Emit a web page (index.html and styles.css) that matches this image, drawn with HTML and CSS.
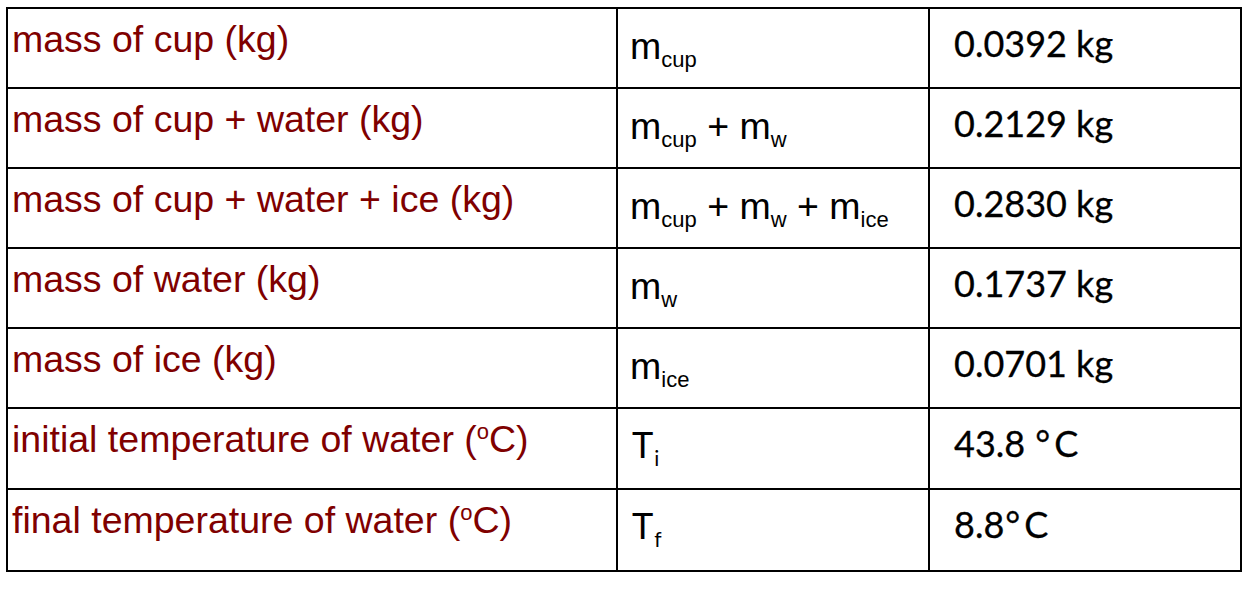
FILE: index.html
```html
<!DOCTYPE html>
<html>
<head>
<meta charset="utf-8">
<link rel="stylesheet" href="styles.css">
</head>
<body>
<table class="data">
  <colgroup>
    <col class="c-label">
    <col class="c-sym">
    <col class="c-val">
  </colgroup>
  <tr class="r80">
    <td class="label">mass of cup (kg)</td>
    <td class="sym">m<span class="sub">cup</span></td>
    <td class="val">0.0392 kg</td>
  </tr>
  <tr class="r80">
    <td class="label">mass of cup + water (kg)</td>
    <td class="sym">m<span class="sub">cup</span> + m<span class="sub">w</span></td>
    <td class="val">0.2129 kg</td>
  </tr>
  <tr class="r80">
    <td class="label">mass of cup + water + ice (kg)</td>
    <td class="sym">m<span class="sub">cup</span> + m<span class="sub">w</span> + m<span class="sub">ice</span></td>
    <td class="val">0.2830 kg</td>
  </tr>
  <tr class="r80">
    <td class="label">mass of water (kg)</td>
    <td class="sym">m<span class="sub">w</span></td>
    <td class="val">0.1737 kg</td>
  </tr>
  <tr class="r80">
    <td class="label">mass of ice (kg)</td>
    <td class="sym">m<span class="sub">ice</span></td>
    <td class="val">0.0701 kg</td>
  </tr>
  <tr class="r81">
    <td class="label">initial temperature of water (<span class="sup">o</span>C)</td>
    <td class="sym sym-t">T<span class="sub sub-t">i</span></td>
    <td class="val">43.8 <span class="deg">°</span>C</td>
  </tr>
  <tr class="r82">
    <td class="label">final temperature of water (<span class="sup">o</span>C)</td>
    <td class="sym sym-t">T<span class="sub sub-t">f</span></td>
    <td class="val">8.8<span class="deg">°</span>C</td>
  </tr>
</table>
</body>
</html>
```

FILE: styles.css
```css
html, body {
  margin: 0;
  padding: 0;
  background: #ffffff;
}

body {
  padding: 7px 0 0 6px;
}

.data {
  border-spacing: 0;
  border-collapse: separate;
  table-layout: fixed;
  width: 1236px;
  border-top: 2px solid #000;
  border-left: 2px solid #000;
}

.c-label { width: 610px; }
.c-sym { width: 312px; }
.c-val { width: 312px; }

.data td {
  box-sizing: border-box;
  border-right: 2px solid #000;
  border-bottom: 2px solid #000;
  vertical-align: top;
  white-space: nowrap;
  overflow: hidden;
  padding: 0;
}

.r80 td { height: 80px; }
.r81 td { height: 81px; }
.r82 td { height: 82px; }

.label {
  font-family: "Liberation Sans", Arial, sans-serif;
  font-size: 37.5px;
  line-height: 37px;
  color: #7f0000;
  padding: 12px 0 0 4px !important;
}

.sup {
  font-size: 22px;
  line-height: 0;
  vertical-align: 13px;
}

.sym {
  font-family: "Liberation Sans", Arial, sans-serif;
  font-size: 37.5px;
  line-height: 37px;
  color: #000;
  padding: 19px 0 0 12px !important;
}

.sub {
  font-size: 22px;
  line-height: 0;
  vertical-align: -8px;
}

.sym-t {
  font-family: Lato, "Open Sans", sans-serif;
  font-size: 36px;
  line-height: 36px;
  padding: 17px 0 0 14px !important;
}

.sub-t {
  font-size: 21px;
  vertical-align: -8px;
  margin-left: 1px;
}

.val {
  font-family: Lato, "Open Sans", sans-serif;
  font-size: 36px;
  line-height: 35px;
  color: #000;
  padding: 17px 0 0 24px !important;
  -webkit-text-stroke: 0.3px #000;
}

.deg {
  margin-left: 1px;
  margin-right: 4px;
}
```
